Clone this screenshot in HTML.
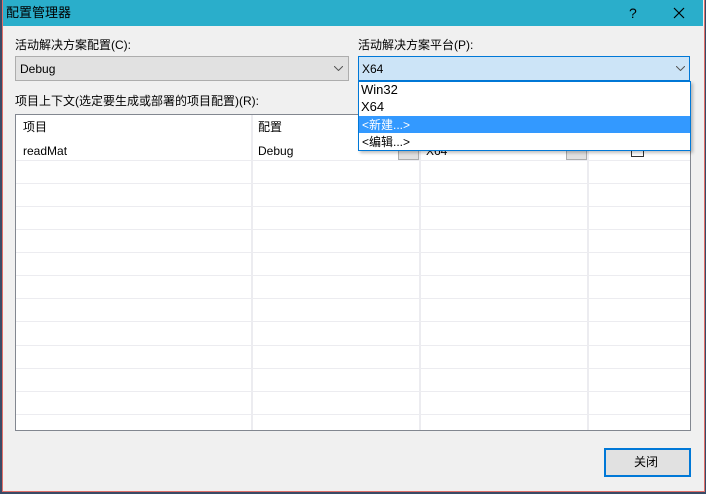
<!DOCTYPE html>
<html><head><meta charset="utf-8"><style>
body{margin:0;width:706px;height:494px;overflow:hidden;background:#3a4a66;font-family:"Liberation Sans","Noto Sans CJK SC",sans-serif;font-size:12px;color:#000;position:relative}
.a{position:absolute}
#win{left:2px;top:0;width:701px;height:491px;background:#f0f0f0;border:1px solid #e0706a;border-top:none}
#title{left:3px;top:0;width:700px;height:26px;background:#2aaecb}
.t{position:absolute;white-space:nowrap;line-height:16px}
.hl{position:absolute;height:1px;background:#ececf0;left:16px;width:674px}
.vl{position:absolute;width:2px;background:#ececf0;top:115px;height:315px}
</style></head><body>
<div class="a" id="win"></div>
<div class="a" id="title"></div>
<div class="t" style="left:6px;top:5px;font-size:13px">配置管理器</div>
<div class="t" style="left:629px;top:5px;font-size:14px">?</div>
<svg class="a" style="left:673px;top:7px" width="12" height="12"><path d="M1 1L11 11M11 1L1 11" stroke="#000" stroke-width="1.2"/></svg>

<div class="t" style="left:15px;top:37px">活动解决方案配置(C):</div>
<div class="a" style="left:15px;top:56px;width:332px;height:23px;background:#e1e1e1;border:1px solid #adadad"></div>
<div class="t" style="left:20px;top:61px">Debug</div>
<svg class="a" style="left:334px;top:66px" width="9" height="5"><path d="M0 0L4.5 4.5L9 0" fill="none" stroke="#555"/></svg>

<div class="t" style="left:358px;top:37px">活动解决方案平台(P):</div>
<div class="a" style="left:358px;top:56px;width:330px;height:23px;background:#cce4f7;border:1px solid #0078d7"></div>
<div class="t" style="left:362px;top:61px">X64</div>
<svg class="a" style="left:676px;top:66px" width="9" height="5"><path d="M0 0L4.5 4.5L9 0" fill="none" stroke="#555"/></svg>

<div class="t" style="left:15px;top:93px">项目上下文(选定要生成或部署的项目配置)(R):</div>
<div class="a" style="left:15px;top:114px;width:674px;height:315px;background:#fff;border:1px solid #828790"></div>
<div class="vl" style="left:251px"></div>
<div class="vl" style="left:419px"></div>
<div class="vl" style="left:587px"></div>
<div class="hl" style="top:160px"></div><div class="hl" style="top:183px"></div><div class="hl" style="top:206px"></div><div class="hl" style="top:229px"></div><div class="hl" style="top:252px"></div><div class="hl" style="top:275px"></div><div class="hl" style="top:298px"></div><div class="hl" style="top:321px"></div><div class="hl" style="top:345px"></div><div class="hl" style="top:368px"></div><div class="hl" style="top:391px"></div><div class="hl" style="top:414px"></div>
<div class="t" style="left:23px;top:119px">项目</div>
<div class="t" style="left:258px;top:119px">配置</div>
<div class="t" style="left:23px;top:143px">readMat</div>
<div class="t" style="left:258px;top:143px">Debug</div>
<div class="a" style="left:398px;top:140px;width:19px;height:18px;background:#e1e1e1;border:1px solid #adadad"></div>
<div class="t" style="left:426px;top:143px">X64</div>
<div class="a" style="left:566px;top:140px;width:19px;height:18px;background:#e1e1e1;border:1px solid #adadad"></div>
<div class="a" style="left:631px;top:144px;width:11px;height:11px;border:1px solid #333;background:#fff"></div>

<div class="a" style="left:358px;top:81px;width:331px;height:68px;background:#fff;border:1px solid #0078d7;box-shadow:2px 2px 3px rgba(0,0,0,.25)"></div>
<div class="a" style="left:359px;top:116px;width:331px;height:17px;background:#3399ff"></div>
<div class="t" style="left:361px;top:82px;font-size:13px">Win32</div>
<div class="t" style="left:361px;top:99px;font-size:13px">X64</div>
<div class="t" style="left:362px;top:117px;color:#fff">&lt;新建...&gt;</div>
<div class="t" style="left:362px;top:134px">&lt;编辑...&gt;</div>

<div class="a" style="left:604px;top:448px;width:83px;height:25px;background:#e1e1e1;border:2px solid #0078d7"></div>
<div class="t" style="left:634px;top:454px">关闭</div>
</body></html>
